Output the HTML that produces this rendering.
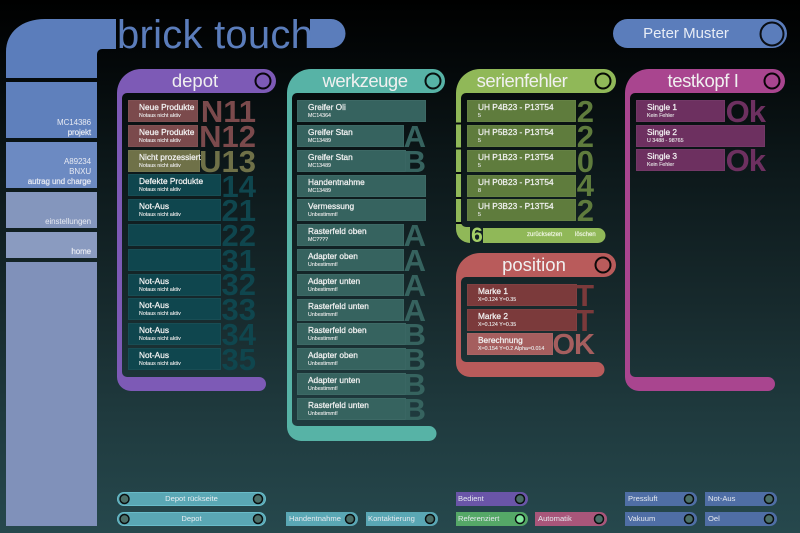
<!DOCTYPE html>
<html><head><meta charset="utf-8"><style>
html,body{margin:0;padding:0}
body{width:800px;height:533px;overflow:hidden;position:relative;background:linear-gradient(180deg,#000 0,#040809 12%,#0c1719 30%,#172a2d 58%,#1f3a3e 78%,#26484d 100%);font-family:"Liberation Sans",sans-serif;color:#fff}
svg{position:absolute;left:0;top:0}
div{position:absolute;white-space:nowrap}
.r{height:22px;box-sizing:border-box;border:1px solid rgba(255,255,255,.04)}
.t{left:10px;top:0;font-size:8.3px;line-height:13px;color:#f2f2f2;-webkit-text-stroke:.25px #f2f2f2}
.s{left:10px;top:12px;font-size:5.3px;line-height:7px;color:#e8e8e8;-webkit-text-stroke:.12px #e8e8e8}
.b{font-size:31px;line-height:26px;font-weight:bold;text-align:right;height:26px}
.h{font-size:18.5px;line-height:24px;top:69px;text-align:center;color:#f0f0f0}
.l{right:709px;font-size:8px;line-height:11px;color:#e6e9f2;text-align:right;letter-spacing:-.1px}
.k{font-size:7.6px;line-height:14px;color:#e8eef2;text-align:center}
.n{font-size:7.6px;line-height:14px;color:#e4e8ee}
</style></head><body>
<svg width="800" height="533" viewBox="0 0 800 533">
<path d="M6 78V52C6 32 22 19 45 19H116V49H102A5 5 0 0 0 97 54V78Z" fill="#5b7dbb"/>
<rect x="6" y="82" width="91" height="56" fill="#5f80bc"/>
<rect x="6" y="142" width="91" height="46" fill="#6c8ac2"/>
<rect x="6" y="192" width="91" height="36" fill="#8496bd"/>
<rect x="6" y="232" width="91" height="26" fill="#8a9bc0"/>
<rect x="6" y="262" width="91" height="264" fill="#8091ba"/>
<path d="M310 19H331A14.500 14.500 0 0 1 331 48H310Z" fill="#5b7dbb"/>
<rect x="613" y="19" width="174" height="29" rx="14.500" fill="#5b7dbb"/>
<circle cx="772" cy="34" r="11.500" fill="#5b7dbb" stroke="#0a0e14" stroke-width="2"/>
<path d="M117 93A24 24 0 0 1 141 69H264A12 12 0 0 1 264 93H127A5 5 0 0 0 122 98V372A5 5 0 0 0 127 377H259A7 7 0 0 1 259 391H131A14 14 0 0 1 117 377Z" fill="#7d5ab6"/>
<circle cx="263" cy="81" r="7.500" fill="#7d5ab6" stroke="#08060c" stroke-width="2"/>
<path d="M287 93A24 24 0 0 1 311 69H433A12 12 0 0 1 433 93H297A5 5 0 0 0 292 98V421A5 5 0 0 0 297 426H429A7.500 7.500 0 0 1 429 441H301A14 14 0 0 1 287 427Z" fill="#57b3a6"/>
<circle cx="433" cy="81" r="7.500" fill="#57b3a6" stroke="#08100f" stroke-width="2"/>
<path d="M456 93A24 24 0 0 1 480 69H604A12 12 0 0 1 604 93H466A5 5 0 0 0 461 98V222A5 5 0 0 0 466 227H470V243H470A14 14 0 0 1 456 229Z" fill="#90b858"/>
<path d="M483 228H598A7.500 7.500 0 0 1 598 243H483Z" fill="#90b858"/>
<rect x="456" y="122.500" width="6" height="2" fill="#060b0c"/><rect x="456" y="147.500" width="6" height="2" fill="#060b0c"/><rect x="456" y="172" width="6" height="2" fill="#060b0c"/><rect x="456" y="197" width="6" height="2" fill="#060b0c"/><rect x="456" y="222" width="6" height="2" fill="#060b0c"/>
<circle cx="603" cy="81" r="7.500" fill="#90b858" stroke="#060a04" stroke-width="2"/>
<path d="M456 277A24 24 0 0 1 480 253H604A12 12 0 0 1 604 277H466A5 5 0 0 0 461 282V357A5 5 0 0 0 466 362H597A7.500 7.500 0 0 1 597 377H470A14 14 0 0 1 456 363Z" fill="#b95b5b"/>
<circle cx="603" cy="265" r="7.500" fill="#b95b5b" stroke="#0d0a0a" stroke-width="2"/>
<path d="M625 93A24 24 0 0 1 649 69H773A12 12 0 0 1 773 93H635A5 5 0 0 0 630 98V372A5 5 0 0 0 635 377H768A7 7 0 0 1 768 391H639A14 14 0 0 1 625 377Z" fill="#a9458f"/>
<circle cx="772" cy="81" r="7.500" fill="#a9458f" stroke="#0a0408" stroke-width="2"/>
<g stroke-width="1">
<rect x="117.500" y="492.500" width="148" height="13" rx="6.500" fill="#5aa7b4" stroke="#69bcc9"/>
<rect x="117.500" y="512.500" width="148" height="13" rx="6.500" fill="#5aa7b4" stroke="#69bcc9"/>
<path d="M286 512H351A7 7 0 0 1 351 526H286Z" fill="#5aa7b4"/>
<path d="M366 512H431A7 7 0 0 1 431 526H366Z" fill="#5aa7b4"/>
<path d="M456 492H521A7 7 0 0 1 521 506H456Z" fill="#6a55a8"/>
<path d="M456 512H521A7 7 0 0 1 521 526H456Z" fill="#55a867"/>
<path d="M535 512H600A7 7 0 0 1 600 526H535Z" fill="#a8567a"/>
<path d="M625 492H690A7 7 0 0 1 690 506H625Z" fill="#4f6ea5"/>
<path d="M625 512H690A7 7 0 0 1 690 526H625Z" fill="#4f6ea5"/>
<path d="M705 492H770A7 7 0 0 1 770 506H705Z" fill="#4f6ea5"/>
<path d="M705 512H770A7 7 0 0 1 770 526H705Z" fill="#4f6ea5"/>
</g>
<g fill="#4b6f68" stroke="#0a0f10" stroke-width="1.500">
<circle cx="124.500" cy="499" r="4.500"/><circle cx="258" cy="499" r="4.500"/>
<circle cx="124.500" cy="519" r="4.500"/><circle cx="258" cy="519" r="4.500"/>
<circle cx="350" cy="519" r="4.500"/><circle cx="430" cy="519" r="4.500"/>
<circle cx="520" cy="499" r="4.500"/>
<circle cx="520" cy="519" r="4.500" fill="#7fe89a"/>
<circle cx="599" cy="519" r="4.500"/>
<circle cx="689" cy="499" r="4.500"/><circle cx="689" cy="519" r="4.500"/>
<circle cx="769" cy="499" r="4.500"/><circle cx="769" cy="519" r="4.500"/>
</g>
</svg>

<div style="left:117px;top:11px;font-size:40px;line-height:48px;color:#5b7dbb;letter-spacing:.25px">brick touch</div>
<div style="left:613px;top:19px;width:146px;text-align:center;font-size:15px;line-height:29px;color:#e8edf6">Peter Muster</div>

<div class="l" style="top:117px">MC14386</div><div class="l" style="top:127px;-webkit-text-stroke:.2px #e6e9f2">projekt</div>
<div class="l" style="top:156px">A89234</div><div class="l" style="top:166px">BNXU</div><div class="l" style="top:176px;-webkit-text-stroke:.2px #e6e9f2">autrag und charge</div>
<div class="l" style="top:216px">einstellungen</div><div class="l" style="top:246px;-webkit-text-stroke:.2px #e6e9f2">home</div>

<div class="h" style="left:117px;width:156px">depot</div>
<div class="h" style="left:287px;width:156px;letter-spacing:-.5px">werkzeuge</div>
<div class="h" style="left:450px;width:144px;letter-spacing:-.5px">serienfehler</div>
<div class="h" style="left:456px;width:156px;top:253px">position</div>
<div class="h" style="left:625px;width:156px;letter-spacing:-.4px">testkopf I</div>

<div class="r" style="left:128px;top:100px;width:70px;background:#7b4a4c"><div class="t">Neue Produkte</div><div class="s">Notaus nicht aktiv</div></div><div class="b" style="left:198px;top:99px;width:58px;color:#7b4a4c">N11</div>
<div class="r" style="left:128px;top:125px;width:70px;background:#7b4a4c"><div class="t">Neue Produkte</div><div class="s">Notaus nicht aktiv</div></div><div class="b" style="left:198px;top:124px;width:58px;color:#7b4a4c">N12</div>
<div class="r" style="left:128px;top:150px;width:72px;background:#6f7148"><div class="t">Nicht prozessiert</div><div class="s">Notaus nicht aktiv</div></div><div class="b" style="left:198px;top:149px;width:58px;color:#6f7148">U13</div>
<div class="r" style="left:128px;top:174px;width:93px;background:#0f464e"><div class="t">Defekte Produkte</div><div class="s">Notaus nicht aktiv</div></div><div class="b" style="left:198px;top:174px;width:58px;color:#0f464e">14</div>
<div class="r" style="left:128px;top:199px;width:93px;background:#0f464e"><div class="t">Not-Aus</div><div class="s">Notaus nicht aktiv</div></div><div class="b" style="left:198px;top:198px;width:58px;color:#0f464e">21</div>
<div class="r" style="left:128px;top:224px;width:93px;background:#0f464e"></div><div class="b" style="left:198px;top:223px;width:58px;color:#0f464e">22</div>
<div class="r" style="left:128px;top:249px;width:93px;background:#0f464e"></div><div class="b" style="left:198px;top:248px;width:58px;color:#0f464e">31</div>
<div class="r" style="left:128px;top:274px;width:93px;background:#0f464e"><div class="t">Not-Aus</div><div class="s">Notaus nicht aktiv</div></div><div class="b" style="left:198px;top:272px;width:58px;color:#0f464e">32</div>
<div class="r" style="left:128px;top:298px;width:93px;background:#0f464e"><div class="t">Not-Aus</div><div class="s">Notaus nicht aktiv</div></div><div class="b" style="left:198px;top:297px;width:58px;color:#0f464e">33</div>
<div class="r" style="left:128px;top:323px;width:93px;background:#0f464e"><div class="t">Not-Aus</div><div class="s">Notaus nicht aktiv</div></div><div class="b" style="left:198px;top:322px;width:58px;color:#0f464e">34</div>
<div class="r" style="left:128px;top:348px;width:93px;background:#0f464e"><div class="t">Not-Aus</div><div class="s">Notaus nicht aktiv</div></div><div class="b" style="left:198px;top:347px;width:58px;color:#0f464e">35</div>

<div class="r" style="left:297px;top:100px;width:129px;background:#36635f"><div class="t">Greifer Oli</div><div class="s">MC14364</div></div>
<div class="r" style="left:297px;top:125px;width:107px;background:#36635f"><div class="t">Greifer Stan</div><div class="s">MC13489</div></div><div class="b" style="left:396px;top:124px;width:30px;color:#36635f">A</div>
<div class="r" style="left:297px;top:150px;width:109px;background:#36635f"><div class="t">Greifer Stan</div><div class="s">MC13489</div></div><div class="b" style="left:396px;top:149px;width:30px;color:#36635f">B</div>
<div class="r" style="left:297px;top:175px;width:129px;background:#36635f"><div class="t">Handentnahme</div><div class="s">MC13489</div></div>
<div class="r" style="left:297px;top:199px;width:129px;background:#36635f"><div class="t">Vermessung</div><div class="s">Unbestimmt!</div></div>
<div class="r" style="left:297px;top:224px;width:107px;background:#36635f"><div class="t">Rasterfeld oben</div><div class="s">MC????</div></div><div class="b" style="left:396px;top:223px;width:30px;color:#36635f">A</div>
<div class="r" style="left:297px;top:249px;width:107px;background:#36635f"><div class="t">Adapter oben</div><div class="s">Unbestimmt!</div></div><div class="b" style="left:396px;top:248px;width:30px;color:#36635f">A</div>
<div class="r" style="left:297px;top:274px;width:107px;background:#36635f"><div class="t">Adapter unten</div><div class="s">Unbestimmt!</div></div><div class="b" style="left:396px;top:273px;width:30px;color:#36635f">A</div>
<div class="r" style="left:297px;top:299px;width:107px;background:#36635f"><div class="t">Rasterfeld unten</div><div class="s">Unbestimmt!</div></div><div class="b" style="left:396px;top:298px;width:30px;color:#36635f">A</div>
<div class="r" style="left:297px;top:323px;width:109px;background:#36635f"><div class="t">Rasterfeld oben</div><div class="s">Unbestimmt!</div></div><div class="b" style="left:396px;top:322px;width:30px;color:#36635f">B</div>
<div class="r" style="left:297px;top:348px;width:109px;background:#36635f"><div class="t">Adapter oben</div><div class="s">Unbestimmt!</div></div><div class="b" style="left:396px;top:347px;width:30px;color:#36635f">B</div>
<div class="r" style="left:297px;top:373px;width:109px;background:#36635f"><div class="t">Adapter unten</div><div class="s">Unbestimmt!</div></div><div class="b" style="left:396px;top:372px;width:30px;color:#36635f">B</div>
<div class="r" style="left:297px;top:398px;width:109px;background:#36635f"><div class="t">Rasterfeld unten</div><div class="s">Unbestimmt!</div></div><div class="b" style="left:396px;top:397px;width:30px;color:#36635f">B</div>

<div class="r" style="left:467px;top:100px;width:109px;background:#5f7c3d"><div class="t">UH P4B23 - P13T54</div><div class="s">5</div></div><div class="b" style="left:566px;top:99px;width:28px;color:#5f7c3d">2</div>
<div class="r" style="left:467px;top:125px;width:109px;background:#5f7c3d"><div class="t">UH P5B23 - P13T54</div><div class="s">5</div></div><div class="b" style="left:566px;top:124px;width:28px;color:#5f7c3d">2</div>
<div class="r" style="left:467px;top:150px;width:109px;background:#5f7c3d"><div class="t">UH P1B23 - P13T54</div><div class="s">5</div></div><div class="b" style="left:566px;top:149px;width:28px;color:#5f7c3d">0</div>
<div class="r" style="left:467px;top:175px;width:109px;background:#5f7c3d"><div class="t">UH P0B23 - P13T54</div><div class="s">8</div></div><div class="b" style="left:566px;top:173px;width:28px;color:#5f7c3d">4</div>
<div class="r" style="left:467px;top:199px;width:109px;background:#5f7c3d"><div class="t">UH P3B23 - P13T54</div><div class="s">5</div></div><div class="b" style="left:566px;top:198px;width:28px;color:#5f7c3d">2</div>
<div style="left:471px;top:226px;width:12px;font-size:21px;line-height:19px;font-weight:bold;color:#a4cf67;text-align:center">6</div>
<div style="left:527px;top:231px;font-size:6px;line-height:8px;color:#eef5e0;-webkit-text-stroke:.2px #eef5e0">zurücksetzen</div>
<div style="left:575px;top:231px;font-size:6px;line-height:8px;color:#eef5e0;-webkit-text-stroke:.2px #eef5e0">löschen</div>

<div class="r" style="left:467px;top:284px;width:110px;background:#7b3a3b"><div class="t">Marke 1</div><div class="s">X=0.124 Y=0.35</div></div><div class="b" style="left:566px;top:283px;width:28px;color:#7b3a3b">T</div>
<div class="r" style="left:467px;top:309px;width:110px;background:#7b3a3b"><div class="t">Marke 2</div><div class="s">X=0.124 Y=0.35</div></div><div class="b" style="left:566px;top:308px;width:28px;color:#7b3a3b">T</div>
<div class="r" style="left:467px;top:333px;width:86px;background:#a55e5e"><div class="t">Berechnung</div><div class="s">X=0.154 Y=0.2 Alpha=0.014</div></div><div class="b" style="left:544px;top:332px;width:50px;color:#a55e5e;font-size:29px;letter-spacing:-1px">OK</div>

<div class="r" style="left:636px;top:100px;width:89px;background:#6d3060"><div class="t">Single 1</div><div class="s">Kein Fehler</div></div><div class="b" style="left:725px;top:99px;width:40px;color:#6d3060;letter-spacing:-1px">Ok</div>
<div class="r" style="left:636px;top:125px;width:129px;background:#6d3060"><div class="t">Single 2</div><div class="s">U 3488 - 98765</div></div>
<div class="r" style="left:636px;top:149px;width:89px;background:#6d3060"><div class="t">Single 3</div><div class="s">Kein Fehler</div></div><div class="b" style="left:725px;top:148px;width:40px;color:#6d3060;letter-spacing:-1px">Ok</div>

<div class="k" style="left:117px;top:492px;width:149px">Depot rückseite</div>
<div class="k" style="left:117px;top:512px;width:149px">Depot</div>
<div class="n" style="left:289px;top:512px">Handentnahme</div>
<div class="n" style="left:368px;top:512px">Kontaktierung</div>
<div class="n" style="left:458px;top:492px">Bedient</div>
<div class="n" style="left:458px;top:512px">Referenziert</div>
<div class="n" style="left:538px;top:512px">Automatik</div>
<div class="n" style="left:628px;top:492px">Pressluft</div>
<div class="n" style="left:628px;top:512px">Vakuum</div>
<div class="n" style="left:708px;top:492px">Not-Aus</div>
<div class="n" style="left:708px;top:512px">Oel</div>
</body></html>
